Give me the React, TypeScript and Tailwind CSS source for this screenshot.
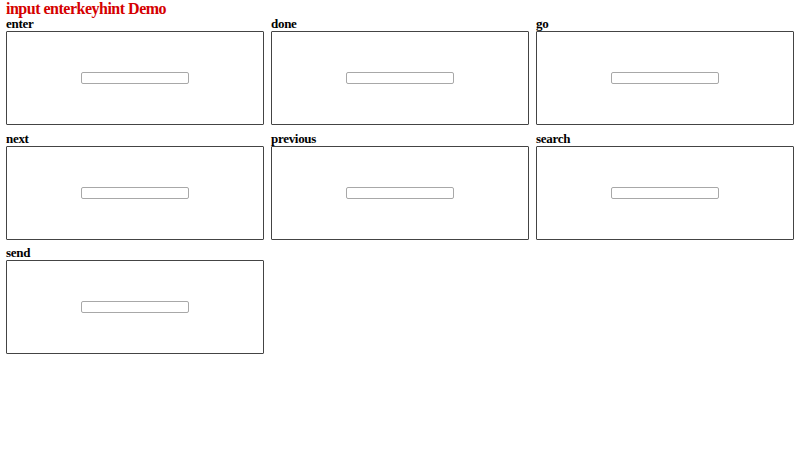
const hints = ["enter", "done", "go", "next", "previous", "search", "send"];

export default function App() {
  return (
    <div className="min-h-[450px] bg-white px-[6px] font-['Liberation_Serif',serif] text-black">
      <h1 className="text-[16px] font-bold leading-[17px] tracking-[-0.5px] text-[#d50000]">
        input enterkeyhint Demo
      </h1>
      <div className="grid grid-cols-3 gap-x-[7px] gap-y-[6.5px]">
        {hints.map((hint) => (
          <div key={hint}>
            <div className="text-[13px] font-bold leading-[14px] tracking-[-0.3px]">{hint}</div>
            <div className="flex h-[94px] items-center justify-center rounded-[1px] border border-[#444]">
              <input
                type="text"
                enterKeyHint={hint as React.InputHTMLAttributes<HTMLInputElement>["enterKeyHint"]}
                className="h-[12px] w-[108px] rounded-[2px] border border-[#a8a8a8] bg-white"
              />
            </div>
          </div>
        ))}
      </div>
    </div>
  );
}
